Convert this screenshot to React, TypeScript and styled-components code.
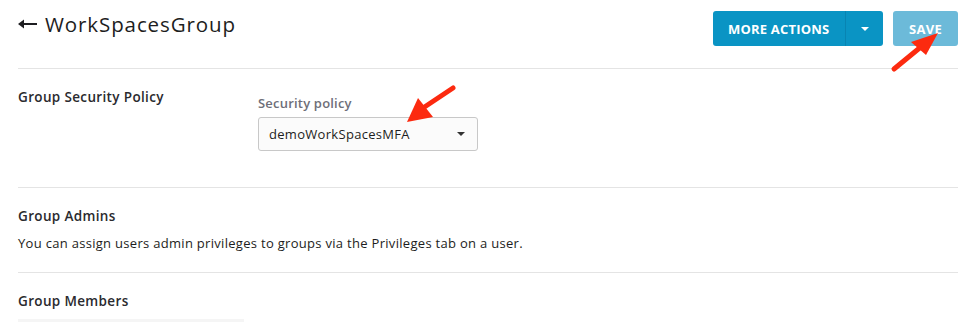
import styled, { createGlobalStyle } from "styled-components";

const GlobalStyle = createGlobalStyle`
  body {
    margin: 0;
    background: #fff;
    font-family: "Open Sans", "Liberation Sans", sans-serif;
    color: #1d1d21;
  }
`;

const Page = styled.div`
  position: relative;
  width: 968px;
  height: 322px;
  overflow: hidden;
  padding: 0 10px 0 18px;
  box-sizing: border-box;
`;

const Header = styled.div`
  display: flex;
  align-items: flex-start;
  justify-content: space-between;
  height: 69px;
  box-sizing: border-box;
  padding-top: 11px;
  border-bottom: 1px solid #e4e4e4;
`;

const Title = styled.h1`
  margin: 0;
  height: 25px;
  font-size: 20.5px;
  font-weight: 400;
  letter-spacing: 0.9px;
  display: flex;
  align-items: center;
  gap: 8px;
  color: #1d1d21;
`;

const Actions = styled.div`
  display: flex;
  gap: 10px;
`;

const SplitButton = styled.div`
  display: flex;
  height: 35px;
  border-radius: 3px;
  background: #0a94c4;
  overflow: hidden;
`;

const Button = styled.button<{ $faded?: boolean }>`
  height: 35px;
  width: 65px;
  border: 0;
  border-radius: 3px;
  background: ${(p) => (p.$faded ? "#6cbad9" : "#0a94c4")};
  color: #fff;
  font-family: "Open Sans", sans-serif;
  font-weight: 700;
  font-size: 13px;
  letter-spacing: 0.3px;
  padding: 0;
`;

const SplitMain = styled.span`
  display: flex;
  align-items: center;
  padding: 0 15px;
  width: 133px;
  box-sizing: border-box;
  color: #fff;
  font-weight: 700;
  font-size: 13px;
  letter-spacing: 0.2px;
  border-right: 1px solid #0884b2;
`;

const SplitCaret = styled.span`
  display: flex;
  align-items: center;
  justify-content: center;
  width: 37px;
`;

const Section = styled.div`
  display: flex;
  padding: 19px 0 0;
  border-bottom: 1px solid #e4e4e4;
`;

const SectionTitle = styled.div`
  width: 240px;
  font-size: 13.5px;
  font-weight: 600;
  letter-spacing: 0.35px;
  line-height: 18px;
  color: #2a2a2e;
`;

const Field = styled.div`
  display: flex;
  flex-direction: column;
  gap: 5px;
  padding-top: 6px;
  padding-bottom: 36px;
`;

const Label = styled.label`
  font-size: 13px;
  font-weight: 600;
  letter-spacing: 0.2px;
  color: #6e6e78;
`;

const Select = styled.div`
  width: 220px;
  height: 34px;
  box-sizing: border-box;
  border: 1px solid #c8c8c8;
  border-radius: 3px;
  background: #fbfbfb;
  display: flex;
  align-items: center;
  justify-content: space-between;
  padding: 0 12px 0 10px;
  font-size: 13px;
  letter-spacing: 0.3px;
`;

const Caret = styled.span<{ $color: string }>`
  width: 0;
  height: 0;
  border-left: 4px solid transparent;
  border-right: 4px solid transparent;
  border-top: 4px solid ${(p) => p.$color};
`;

const Block = styled.div<{ $last?: boolean }>`
  padding: 19px 0 ${(p) => (p.$last ? "0" : "20px")};
  border-bottom: ${(p) => (p.$last ? "none" : "1px solid #e4e4e4")};
`;

const Text = styled.p`
  margin: 9px 0 0;
  font-size: 13px;
  letter-spacing: 0.3px;
  color: #1d1d21;
`;

const Placeholder = styled.div`
  margin-top: 9px;
  width: 226px;
  height: 10px;
  background: #f5f5f5;
`;

const Overlay = styled.svg`
  position: absolute;
  left: 0;
  top: 0;
  pointer-events: none;
`;

const BackArrow = () => (
  <svg width="19" height="12" viewBox="0 0 19 12">
    <path d="M2 6 H19" stroke="#1d1d21" strokeWidth="2" />
    <path d="M0 6 L6 1.5 V10.5 Z" fill="#1d1d21" />
  </svg>
);

const App = () => {
  return (
    <Page>
      <GlobalStyle />
      <Header>
        <Title>
          <BackArrow />
          WorkSpacesGroup
        </Title>
        <Actions>
          <SplitButton>
            <SplitMain>MORE ACTIONS</SplitMain>
            <SplitCaret>
              <Caret $color="#fff" />
            </SplitCaret>
          </SplitButton>
          <Button $faded>SAVE</Button>
        </Actions>
      </Header>
      <Section>
        <SectionTitle>Group Security Policy</SectionTitle>
        <Field>
          <Label>Security policy</Label>
          <Select>
            demoWorkSpacesMFA
            <Caret $color="#333" />
          </Select>
        </Field>
      </Section>
      <Block>
        <SectionTitle>Group Admins</SectionTitle>
        <Text>You can assign users admin privileges to groups via the Privileges tab on a user.</Text>
      </Block>
      <Block $last>
        <SectionTitle>Group Members</SectionTitle>
        <Placeholder />
      </Block>
      <Overlay width="968" height="322" viewBox="0 0 968 322">
        <line x1="453" y1="88" x2="420" y2="110" stroke="#fc2a0f" strokeWidth="5" strokeLinecap="round" />
        <polygon points="407,122 418,98 433,117" fill="#fc2a0f" />
        <line x1="894" y1="69" x2="922" y2="46" stroke="#fc2a0f" strokeWidth="5" strokeLinecap="round" />
        <polygon points="938,33 911,42 926,55" fill="#fc2a0f" />
      </Overlay>
    </Page>
  );
};

export default App;
